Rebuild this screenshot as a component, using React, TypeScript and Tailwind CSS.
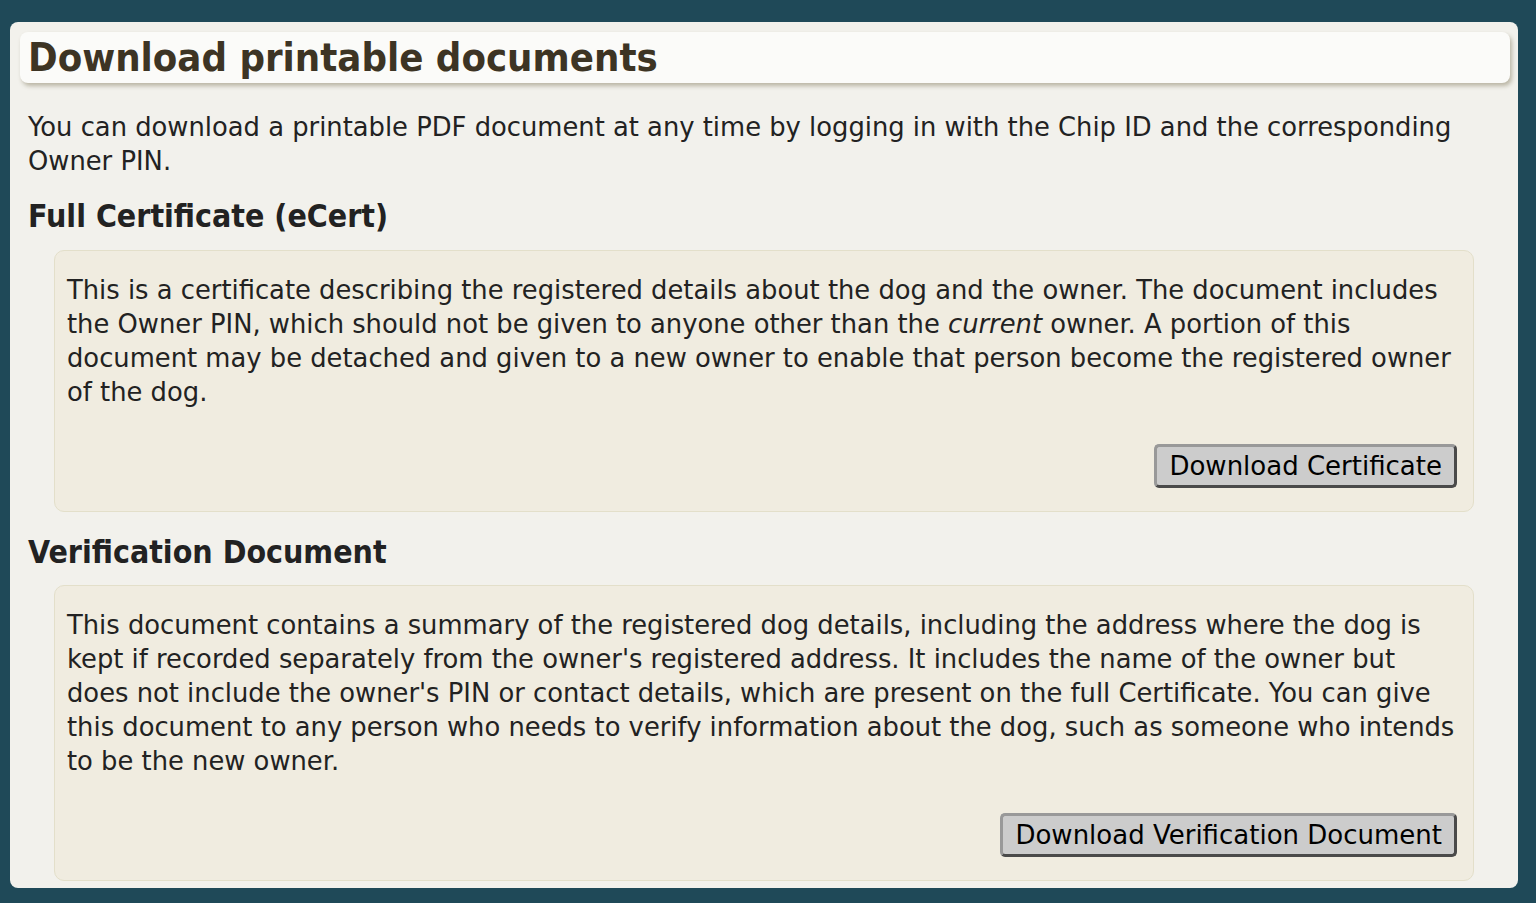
import React from "react";

const body = { fontFamily: '"DejaVu Sans", Verdana, sans-serif' };
const cond = { fontFamily: '"DejaVu Sans", Verdana, sans-serif', fontStretch: "condensed" as const };

export default function App() {
  return (
    <div className="min-h-[903px] w-full bg-[#1f4958] pt-[22px] pl-[10px] pr-[18px] pb-[16px]" style={body}>
      <div className="rounded-[8px] bg-[#f2f1ec] pt-[10px] pb-[7px]">
        <div className="ml-[10px] mr-[8px] h-[51px] rounded-[8px] bg-[#fbfbf9] pl-[8px] shadow-[2px_3px_4px_rgba(120,110,80,0.45)] flex items-center">
          <h1 className="text-[39.7px] font-bold leading-none text-[#3d3424]" style={cond}>Download printable documents</h1>
        </div>
        <div className="px-[18px]">
          <p className="mt-[27px] text-[25.8px] leading-[34px] text-[#222]">
            You can download a printable PDF document at any time by logging in with the Chip ID and the corresponding Owner PIN.
          </p>
          <h2 className="mt-[18px] text-[31.8px] font-bold leading-[40px] text-[#222]" style={cond}>Full Certificate (eCert)</h2>
          <div className="mx-[26px] mt-[14px] rounded-[10px] border border-[#e3dfca] bg-[#f0ece0] pl-[12px] pr-[16px] pt-[22px] pb-[23px]">
            <p className="text-[25.8px] leading-[34px] text-[#222]">
              This is a certificate describing the registered details about the dog and the owner. The document includes the Owner PIN, which should not be given to anyone other than the <em>current</em> owner. A portion of this document may be detached and given to a new owner to enable that person become the registered owner of the dog.
            </p>
            <div className="mt-[35px] flex justify-end">
              <button className="h-[44px] rounded-[5px] border-[3px] border-[#4a4a4a] border-t-[#999] border-l-[#999] bg-[#cccccc] px-[12px] text-[26px] leading-none text-black">
                Download Certificate
              </button>
            </div>
          </div>
          <h2 className="mt-[20px] text-[31.8px] font-bold leading-[40px] text-[#222]" style={cond}>Verification Document</h2>
          <div className="mx-[26px] mt-[13px] rounded-[10px] border border-[#e3dfca] bg-[#f0ece0] pl-[12px] pr-[16px] pt-[22px] pb-[23px]">
            <p className="text-[25.8px] leading-[34px] text-[#222]">
              This document contains a summary of the registered dog details, including the address where the dog is kept if recorded separately from the owner's registered address. It includes the name of the owner but does not include the owner's PIN or contact details, which are present on the full Certificate. You can give this document to any person who needs to verify information about the dog, such as someone who intends to be the new owner.
            </p>
            <div className="mt-[35px] flex justify-end">
              <button className="h-[44px] rounded-[5px] border-[3px] border-[#4a4a4a] border-t-[#999] border-l-[#999] bg-[#cccccc] px-[12px] text-[26px] leading-none text-black">
                Download Verification Document
              </button>
            </div>
          </div>
        </div>
      </div>
    </div>
  );
}
